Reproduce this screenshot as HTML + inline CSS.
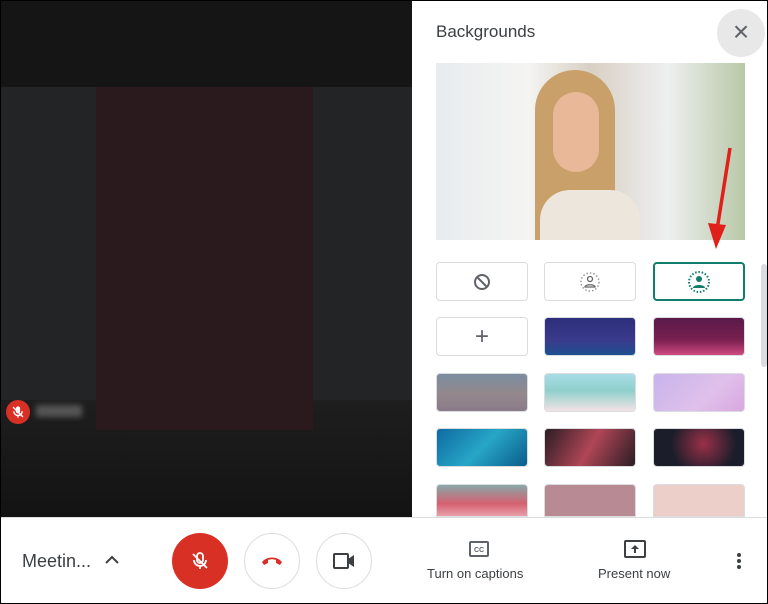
<!DOCTYPE html><html><head><style>
*{margin:0;padding:0;box-sizing:border-box}
body{width:768px;height:604px;position:relative;overflow:hidden;background:#fff;font-family:"Liberation Sans",Arial,sans-serif}
.a{position:absolute}
.t{position:absolute;width:92px;height:39px;border-radius:4px;border:1px solid #dadce0;background:#fff;display:flex;align-items:center;justify-content:center}
</style></head><body>
<div class="a" style="left:0;top:0;width:412px;height:517px;background:#151515"></div>
<div class="a" style="left:0;top:87px;width:412px;height:330px;background:#232425"></div>
<div class="a" style="left:0;top:400px;width:412px;height:117px;background:linear-gradient(#1e1e1f,#131313)"></div>
<div class="a" style="left:96px;top:87px;width:217px;height:343px;background:#2a1a1e"></div>
<div class="a" style="left:6px;top:400px;width:24px;height:24px;border-radius:50%;background:#d93025"></div>
<svg class="a" style="left:11px;top:405px" width="14" height="14" viewBox="0 0 20 20"><rect x="7" y="2" width="6" height="10" rx="3" fill="#fff"/><path d="M4 9a6 6 0 0 0 12 0M10 15v3M3 3l14 14" stroke="#fff" stroke-width="2" fill="none"/></svg>
<div class="a" style="left:36px;top:405px;width:46px;height:12px;background:#555;filter:blur(3px)"></div>
<div class="a" style="left:412px;top:0;width:356px;height:517px;background:#fff"></div>
<div class="a" style="left:436px;top:22px;font-size:17px;color:#3c4043">Backgrounds</div>
<div class="a" style="left:717px;top:9px;width:48px;height:48px;border-radius:50%;background:#e8e8e8;font-size:28px;color:#5f6368;text-align:center;line-height:46px">×</div>
<div class="a" style="left:436px;top:63px;width:309px;height:177px;background:linear-gradient(90deg,#e8ecef 0%,#f4f4f2 30%,#d8d0c4 50%,#eef0f0 75%,#b8c8a8 100%)"></div>
<div class="a" style="left:535px;top:70px;width:80px;height:170px;border-radius:40px 40px 0 0;background:#c9a06a"></div>
<div class="a" style="left:553px;top:92px;width:46px;height:80px;border-radius:23px;background:#e8b898"></div>
<div class="a" style="left:540px;top:190px;width:100px;height:50px;border-radius:30px 30px 0 0;background:#ece6dc"></div>
<svg class="a" style="left:700px;top:145px" width="40" height="110" viewBox="0 0 40 110"><path d="M30 3L17 85" stroke="#e0201a" stroke-width="3.5"/><path d="M8 78l8 26 10-24z" fill="#e0201a"/></svg>
<div class="t" style="left:436px;top:262px"><svg width="18" height="18" viewBox="0 0 18 18"><circle cx="9" cy="9" r="7" fill="none" stroke="#5f6368" stroke-width="2"/><path d="M4 4l10 10" stroke="#5f6368" stroke-width="2"/></svg></div>
<div class="t" style="left:544px;top:262px"><svg width="22" height="22" viewBox="0 0 22 22"><circle cx="11" cy="11" r="9" fill="none" stroke="#999" stroke-width="1.5" stroke-dasharray="1.5 2"/><circle cx="11" cy="8" r="2.5" fill="none" stroke="#666" stroke-width="1.3"/><path d="M6 16c0-3 10-3 10 0z" fill="none" stroke="#666" stroke-width="1.3"/></svg></div>
<div class="t" style="left:653px;top:262px;border:2px solid #137d6b"><svg width="24" height="24" viewBox="0 0 24 24"><circle cx="12" cy="12" r="10" fill="none" stroke="#137d6b" stroke-width="2" stroke-dasharray="1.5 1.8"/><circle cx="12" cy="9" r="3" fill="#137d6b"/><path d="M6 18c0-4 12-4 12 0z" fill="#137d6b"/></svg></div>
<div class="t" style="left:436px;top:317px;font-size:24px;color:#5f6368;font-weight:300">+</div>
<div class="t" style="left:544px;top:317px;background:linear-gradient(#2c2e7a,#3b3a8c 60%,#1d4f8f)"></div>
<div class="t" style="left:653px;top:317px;background:linear-gradient(#5a1a4a,#7a2050 60%,#d04a80)"></div>
<div class="t" style="left:436px;top:373px;background:linear-gradient(#7b8da0,#94888c 55%,#8a7a8a)"></div>
<div class="t" style="left:544px;top:373px;background:linear-gradient(#a8dde6,#8fd0cc 45%,#f2e2e4)"></div>
<div class="t" style="left:653px;top:373px;background:linear-gradient(135deg,#c7b4ec,#e0c0ea 60%,#d8a8e0)"></div>
<div class="t" style="left:436px;top:428px;background:linear-gradient(135deg,#0e6aa2,#27a6c6,#0b5c8c)"></div>
<div class="t" style="left:544px;top:428px;background:linear-gradient(120deg,#2a1d24,#b04656 50%,#2a1d24)"></div>
<div class="t" style="left:653px;top:428px;background:radial-gradient(circle at 55% 40%,#9a3048,#1b1d2a 60%)"></div>
<div class="t" style="left:436px;top:484px;height:33px;border-radius:4px 4px 0 0;background:linear-gradient(#88a8a8,#d46070 60%,#e8a0a8)"></div>
<div class="t" style="left:544px;top:484px;height:33px;border-radius:4px 4px 0 0;background:#b88a94"></div>
<div class="t" style="left:653px;top:484px;height:33px;border-radius:4px 4px 0 0;background:#ebcfc8"></div>
<div class="a" style="left:761px;top:264px;width:6px;height:103px;border-radius:3px;background:#dadce0"></div>
<div class="a" style="left:0;top:517px;width:768px;height:87px;background:#fff;border-top:1px solid #ddd"></div>
<div class="a" style="left:22px;top:551px;font-size:18px;color:#3c4043">Meetin...</div>
<svg class="a" style="left:104px;top:554px" width="16" height="12"><path d="M2 9l6-6 6 6" fill="none" stroke="#3c4043" stroke-width="2"/></svg>
<div class="a" style="left:172px;top:533px;width:56px;height:56px;border-radius:50%;background:#d93025"></div>
<svg class="a" style="left:190px;top:551px" width="20" height="20" viewBox="0 0 20 20"><rect x="7" y="2" width="6" height="10" rx="3" fill="none" stroke="#fff" stroke-width="1.8"/><path d="M4 9a6 6 0 0 0 12 0M10 15v3M3 3l14 14" stroke="#fff" stroke-width="1.8" fill="none"/></svg>
<div class="a" style="left:244px;top:533px;width:56px;height:56px;border-radius:50%;border:1px solid #dadce0"></div>
<svg class="a" style="left:260px;top:554px" width="24" height="12" viewBox="0 0 24 12"><path d="M2 8c5-6 15-6 20 0l-2 3-4-2v-3c-3-1-5-1-8 0v3l-4 2z" fill="#d93025"/></svg>
<div class="a" style="left:316px;top:533px;width:56px;height:56px;border-radius:50%;border:1px solid #dadce0"></div>
<svg class="a" style="left:332px;top:551px" width="24" height="20" viewBox="0 0 24 20"><rect x="2" y="3" width="14" height="14" rx="1" fill="none" stroke="#3c4043" stroke-width="2"/><path d="M16 8l6-4v12l-6-4z" fill="#3c4043"/></svg>
<svg class="a" style="left:469px;top:541px" width="20" height="16" viewBox="0 0 20 16"><rect x="1" y="1" width="18" height="14" rx="1" fill="none" stroke="#5f6368" stroke-width="2"/><text x="10" y="11" font-size="7" text-anchor="middle" fill="#5f6368" font-family="Liberation Sans" font-weight="bold">CC</text></svg>
<div class="a" style="left:427px;top:566px;font-size:13px;color:#3c4043">Turn on captions</div>
<svg class="a" style="left:624px;top:540px" width="22" height="18" viewBox="0 0 22 18"><rect x="1" y="1" width="20" height="16" rx="1" fill="none" stroke="#3c4043" stroke-width="2"/><path d="M11 5l-4 4h3v4h2V9h3z" fill="#3c4043"/></svg>
<div class="a" style="left:598px;top:566px;font-size:13px;color:#3c4043">Present now</div>
<div class="a" style="left:737px;top:553px;width:4px;height:4px;border-radius:2px;background:#3c4043;box-shadow:0 6px 0 #3c4043,0 12px 0 #3c4043"></div>
<div class="a" style="left:0;top:0;width:768px;height:604px;border:1px solid #000"></div>
</body></html>
